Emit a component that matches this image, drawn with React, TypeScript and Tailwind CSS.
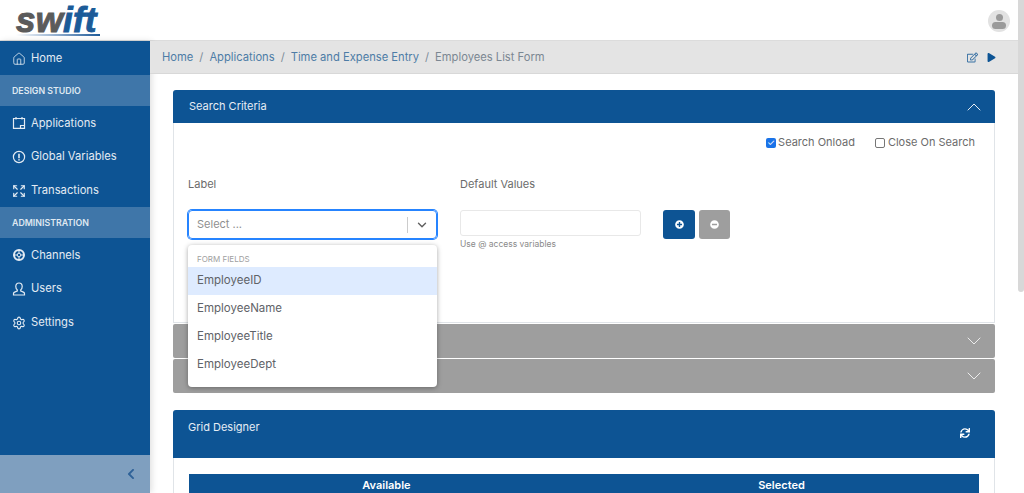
import { ChevronDown, ChevronUp, Expand, Home, Settings } from 'lucide-react';
import { FaChevronLeft, FaMinusCircle, FaPlay, FaPlusCircle, FaRegEdit, FaSync } from 'react-icons/fa';

const Blue = 'bg-[#0d5494]';

function AppsIcon() {
  return (
    <svg width="14" height="14" viewBox="0 0 14 14" fill="none" stroke="currentColor" strokeWidth="1.2">
      <path d="M1.5 2.5h11v9.8h-11z" />
      <path d="M4 1v2.5M10 1v2.5M8.5 12v-2.5h4" />
    </svg>
  );
}

function InfoIcon() {
  return (
    <svg width="14" height="14" viewBox="0 0 14 14" fill="none" stroke="currentColor" strokeWidth="1.2">
      <circle cx="7" cy="7" r="5.6" />
      <path d="M7 3.8v4.4M7 9.2v1.2" strokeWidth="1.6" />
    </svg>
  );
}

function WheelIcon() {
  return (
    <svg width="14" height="14" viewBox="0 0 14 14" fill="none" stroke="currentColor">
      <circle cx="7" cy="7" r="5" strokeWidth="2" />
      <circle cx="7" cy="7" r="1.8" strokeWidth="1" />
      <path d="M7 1.5v3.5M7 9v3.5M1.5 7H5M9 7h3.5" strokeWidth="1" />
    </svg>
  );
}

function UserIcon() {
  return (
    <svg width="14" height="14" viewBox="0 0 14 14" fill="none" stroke="currentColor" strokeWidth="1.2">
      <path d="M7 1c-2 0-3.2 1.400-3.200 3.400 0 1.500.6 2.800 1.500 3.500v1.100c-1.500.5-3.800 1.100-3.800 2.500v1.500h11v-1.500c0-1.400-2.300-2-3.800-2.500V7.900c.9-.7 1.500-2 1.500-3.500C10.200 2.400 9 1 7 1z" />
    </svg>
  );
}

function NavItem({ icon, label, h }: { icon: React.ReactNode; label: string; h: string }) {
  return (
    <div className={`flex items-center gap-[5px] pl-[12px] pt-[1px] text-[11.2px] text-[#e3ebf3] ${h}`}>
      <span className="flex w-[14px] justify-center">{icon}</span>
      <span>{label}</span>
    </div>
  );
}

function NavHeading({ label }: { label: string }) {
  return (
    <div className="flex h-[31px] items-center bg-[#3f76a9] pl-[12px] text-[8.8px] font-semibold text-[#dfe8f1]">
      {label}
    </div>
  );
}

function GrayBar() {
  return (
    <div className="flex h-[34px] items-center justify-end rounded-[2px] bg-[#9e9e9e] pr-[9px] text-[#ececec]">
      <ChevronDown size={24} strokeWidth={1} />
    </div>
  );
}

export default function App() {
  return (
    <div className="relative flex h-[493px] w-[1024px] flex-col overflow-hidden bg-white font-['Inter',sans-serif]">
      <header className="flex h-[41px] shrink-0 items-start justify-between border-b border-[#dcdcdc] pl-[16px] pr-[14px]">
        <div className="mt-[5px] w-[84px]">
          <div className="font-['Liberation_Sans',sans-serif] text-[35px] font-bold italic leading-[29px] tracking-[0.2px] text-[#5b5b5b] [-webkit-text-stroke:1px_currentColor]">
            sw<span className="text-[#1b5b98]">ift</span>
          </div>
          <div className="h-[2px] w-[84px] bg-gradient-to-r from-white to-[#1b5b98]" />
        </div>
        <div className="mt-[10px] flex h-[22px] w-[22px] flex-col items-center overflow-hidden rounded-full bg-[#e2e2e2]">
          <div className="mt-[4px] h-[7px] w-[7px] rounded-full bg-[#9a9a9a]" />
          <div className="mt-[1px] h-[7px] w-[14px] rounded-full bg-[#9a9a9a]" />
        </div>
      </header>

      <div className="flex min-h-0 flex-1">
        <aside className={`flex w-[150px] shrink-0 flex-col ${Blue} shadow-[2px_0_6px_rgba(0,0,0,0.12)]`}>
          <NavItem h="h-[34px]" icon={<Home size={14} strokeWidth={1.4} />} label="Home" />
          <NavHeading label="DESIGN STUDIO" />
          <NavItem h="h-[33px]" icon={<AppsIcon />} label="Applications" />
          <NavItem h="h-[34px]" icon={<InfoIcon />} label="Global Variables" />
          <NavItem h="h-[34px]" icon={<Expand size={14} strokeWidth={2} />} label="Transactions" />
          <NavHeading label="ADMINISTRATION" />
          <NavItem h="h-[33px]" icon={<WheelIcon />} label="Channels" />
          <NavItem h="h-[34px]" icon={<UserIcon />} label="Users" />
          <NavItem h="h-[34px]" icon={<Settings size={14} strokeWidth={1.9} />} label="Settings" />
          <div className="mt-auto flex h-[38px] items-center justify-end bg-[#7f9fbf] pr-[13px] text-[#2f6298]">
            <FaChevronLeft size={12} />
          </div>
        </aside>

        <main className="min-w-0 flex-1 overflow-hidden">
          <div className="flex w-[868px] flex-col">
            <div className="flex h-[33px] items-center justify-between border-b border-[#d8d8d8] bg-[#e4e4e4] pl-[12px] pr-[22px] pt-[1px] text-[11.2px]">
              <div className="flex items-center gap-[6px] text-[#4d7ca6]">
                <span>Home</span>
                <span className="text-[#7c8b99]">/</span>
                <span>Applications</span>
                <span className="text-[#7c8b99]">/</span>
                <span>Time and Expense Entry</span>
                <span className="text-[#7c8b99]">/</span>
                <span className="text-[#7b8792]">Employees List Form</span>
              </div>
              <div className="flex items-center gap-[9px] text-[#0d5494]">
                <FaRegEdit size={11} className="opacity-80" />
                <FaPlay size={9} />
              </div>
            </div>

            <div className="flex flex-col px-[23px] pt-[16px]">
              <section className="h-[233px] rounded-t-[3px] border border-[#e0e4e8] border-t-0">
                <div className={`-mx-px flex h-[33px] items-center justify-between rounded-t-[3px] ${Blue} pl-[16px] pr-[9px] text-[11px] text-[#e6edf4]`}>
                  <span>Search Criteria</span>
                  <ChevronUp size={24} strokeWidth={1} />
                </div>
                <div className="relative pl-[14px] pr-[15px]">
                  <div className="flex h-[38px] items-center justify-end gap-[20px] pr-[4px] pt-[1px] text-[11px] text-[#6b6b6b]">
                    <label className="flex items-center gap-[2px]">
                      <span className="flex h-[10px] w-[10px] items-center justify-center rounded-[2px] bg-[#1a73e8] text-[9px] leading-none text-white">✓</span>
                      Search Onload
                    </label>
                    <label className="flex items-center gap-[3px]">
                      <span className="h-[10px] w-[10px] rounded-[2px] border border-[#767676] bg-white" />
                      Close On Search
                    </label>
                  </div>
                  <div className="flex items-start pt-[16px]">
                    <div className="w-[249px]">
                      <div className="h-[33px] text-[11px] leading-[14px] text-[#6b6b6b]">Label</div>
                      <div className="flex h-[29px] items-center rounded-[4px] border border-[#2684ff] shadow-[0_0_0_1px_#2684ff] pl-[8px] text-[11px] text-[#8f8f8f]">
                        <span className="flex-1">Select ...</span>
                        <span className="h-[16px] w-px bg-[#cccccc]" />
                        <span className="flex w-[28px] justify-center text-[#5f5f5f]">
                          <ChevronDown size={14} strokeWidth={2.4} />
                        </span>
                      </div>
                    </div>
                    <div className="ml-[23px] w-[181px]">
                      <div className="h-[33px] text-[11px] leading-[14px] text-[#6b6b6b]">Default Values</div>
                      <div className="h-[26px] rounded-[3px] border border-[#e8e8e8]" />
                      <div className="mt-[2px] text-[8.5px] text-[#8a8a8a]">Use @ access variables</div>
                    </div>
                    <div className="ml-[22px] flex gap-[4px] pt-[33px]">
                      <div className={`flex h-[29px] w-[32px] items-center justify-center rounded-[3px] ${Blue} text-white`}>
                        <FaPlusCircle size={9} />
                      </div>
                      <div className="flex h-[29px] w-[31px] items-center justify-center rounded-[3px] bg-[#9e9e9e] text-white">
                        <FaMinusCircle size={9} />
                      </div>
                    </div>
                  </div>

                  <div className="absolute left-[14px] top-[122px] z-10 h-[142px] w-[249px] rounded-[4px] bg-white pt-[6px] text-[11.5px] text-[#5f6368] shadow-[0_1px_5px_rgba(0,0,0,0.35)]">
                    <div className="flex h-[16px] items-center pl-[9px] text-[8px] text-[#a0a0a0]">FORM FIELDS</div>
                    <div className="flex h-[28px] items-center bg-[#deebff] pl-[9px]">EmployeeID</div>
                    <div className="flex h-[28px] items-center pl-[9px]">EmployeeName</div>
                    <div className="flex h-[28px] items-center pl-[9px]">EmployeeTitle</div>
                    <div className="flex h-[28px] items-center pl-[9px]">EmployeeDept</div>
                  </div>
                </div>
              </section>
              <div className="mt-[1px] flex flex-col gap-[1px]">
                <GrayBar />
                <GrayBar />
              </div>

              <section className="mt-[17px] rounded-t-[3px] border-x border-[#e0e4e8]">
                <div className={`-mx-px flex h-[48px] justify-between rounded-t-[3px] ${Blue} pl-[15px] pr-[25px] pt-[9px] text-[11px] text-[#e6edf4]`}>
                  <span>Grid Designer</span>
                  <FaSync size={10} className="mt-[9px] text-white" />
                </div>
                <div className="px-[15px] pt-[16px]">
                  <div className={`grid h-[19px] grid-cols-2 pt-[4px] text-center text-[11px] font-semibold leading-[14px] text-white ${Blue}`}>
                    <span>Available</span>
                    <span>Selected</span>
                  </div>
                </div>
              </section>
            </div>
          </div>
        </main>
      </div>

      {/* page scrollbar thumb */}
      <div className="absolute right-0 top-0 h-[292px] w-[6px] rounded-b-[3px] bg-[#d8d8d8]" />
    </div>
  );
}
